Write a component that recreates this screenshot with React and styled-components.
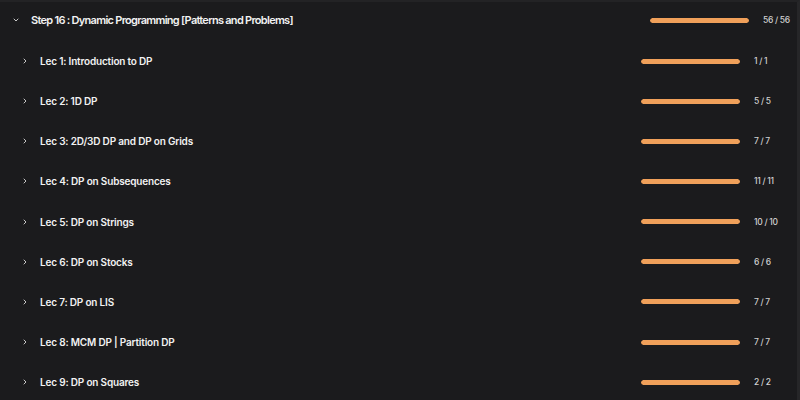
import React from "react";
import styled, { createGlobalStyle } from "styled-components";

const GlobalStyle = createGlobalStyle`
  html, body {
    margin: 0;
    padding: 0;
    background: #1c1c1e;
    font-family: Inter, "Noto Sans", sans-serif;
  }
`;

const Panel = styled.div`
  width: 800px;
  height: 400px;
  box-sizing: border-box;
  background: #1b1b1d;
  border-top: 2px solid #232325;
  border-right: 3px solid #262628;
  overflow: hidden;
`;

const Row = styled.div`
  display: flex;
  align-items: center;
  height: ${(p) => (p.$head ? "36px" : "40.15px")};
  margin-bottom: ${(p) => (p.$head ? "3px" : "0")};
  padding-left: ${(p) => (p.$head ? "11px" : "20px")};
  padding-right: ${(p) => (p.$head ? "10px" : "19px")};
`;

const Chevron = styled.span`
  width: 10px;
  display: flex;
  justify-content: center;
  margin-right: 10px;
  color: #c8c8c8;
`;

const Title = styled.span`
  flex: 1;
  color: #f2f2f2;
  font-weight: 600;
  font-size: ${(p) => (p.$head ? "11px" : "10px")};
  letter-spacing: ${(p) => (p.$head ? "-0.72px" : "-0.18px")};
`;

const Track = styled.div`
  width: 99px;
  height: 5px;
  border-radius: 3px;
  background: #2b1f16;
  overflow: hidden;
`;

const Fill = styled.div`
  height: 100%;
  border-radius: 3px;
  background: #f0a05a;
`;

const Count = styled.span`
  width: 24px;
  margin-left: 14px;
  color: #d2d2d2;
  font-size: 8.5px;
  letter-spacing: -0.3px;
  font-weight: 500;
  white-space: nowrap;
`;

const Down = () => (
  <svg width="8" height="8" viewBox="0 0 24 24" fill="none" stroke="currentColor" strokeWidth="3" strokeLinecap="round" strokeLinejoin="round">
    <path d="M6 9l6 6 6-6" />
  </svg>
);

const Right = () => (
  <svg width="8" height="8" viewBox="0 0 24 24" fill="none" stroke="currentColor" strokeWidth="3" strokeLinecap="round" strokeLinejoin="round">
    <path d="M9 6l6 6-6 6" />
  </svg>
);

const lectures = [
  ["Lec 1: Introduction to DP", 1, 1],
  ["Lec 2: 1D DP", 5, 5],
  ["Lec 3: 2D/3D DP and DP on Grids", 7, 7],
  ["Lec 4: DP on Subsequences", 11, 11],
  ["Lec 5: DP on Strings", 10, 10],
  ["Lec 6: DP on Stocks", 6, 6],
  ["Lec 7: DP on LIS", 7, 7],
  ["Lec 8: MCM DP | Partition DP", 7, 7],
  ["Lec 9: DP on Squares", 2, 2],
];

export default function App() {
  return (
    <>
      <GlobalStyle />
      <Panel>
        <Row $head>
          <Chevron><Down /></Chevron>
          <Title $head>Step 16 : Dynamic Programming [Patterns and Problems]</Title>
          <Track><Fill style={{ width: "100%" }} /></Track>
          <Count $head>56 / 56</Count>
        </Row>
        {lectures.map(([name, done, total]) => (
          <Row key={name}>
            <Chevron><Right /></Chevron>
            <Title>{name}</Title>
            <Track><Fill style={{ width: `${(done / total) * 100}%` }} /></Track>
            <Count>{done} / {total}</Count>
          </Row>
        ))}
      </Panel>
    </>
  );
}
